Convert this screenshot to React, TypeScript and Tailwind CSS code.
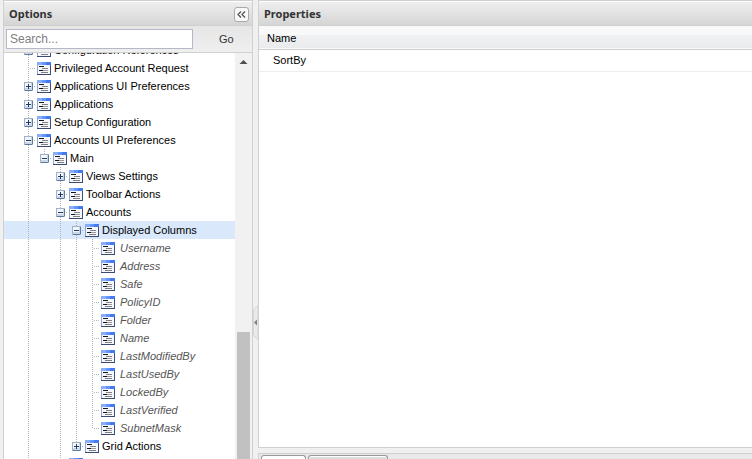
import { useState, type ReactNode } from "react";

type Kind = "leaf" | "plus" | "minus";

interface Row {
  label: string;
  kind: Kind;
  // One entry per ancestor column: true where a guide line passes through.
  guides: boolean[];
  last?: boolean;
  attribute?: boolean;
  selected?: boolean;
}

const columns = [
  "Username",
  "Address",
  "Safe",
  "PolicyID",
  "Folder",
  "Name",
  "LastModifiedBy",
  "LastUsedBy",
  "LockedBy",
  "LastVerified",
  "SubnetMask",
];

const rows: Row[] = [
  { label: "Configuration References", kind: "plus", guides: [false] },
  { label: "Privileged Account Request", kind: "leaf", guides: [false] },
  { label: "Applications UI Preferences", kind: "plus", guides: [false] },
  { label: "Applications", kind: "plus", guides: [false] },
  { label: "Setup Configuration", kind: "plus", guides: [false] },
  { label: "Accounts UI Preferences", kind: "minus", guides: [false] },
  { label: "Main", kind: "minus", guides: [false, true], last: true },
  { label: "Views Settings", kind: "plus", guides: [false, true, false] },
  { label: "Toolbar Actions", kind: "plus", guides: [false, true, false] },
  { label: "Accounts", kind: "minus", guides: [false, true, false] },
  { label: "Displayed Columns", kind: "minus", guides: [false, true, false, true], selected: true },
  ...columns.map((label, i): Row => ({
    label,
    kind: "leaf",
    guides: [false, true, false, true, true],
    last: i === columns.length - 1,
    attribute: true,
  })),
  { label: "Grid Actions", kind: "plus", guides: [false, true, false, true], last: true },
  { label: "", kind: "plus", guides: [false, true, false] },
];

const dots = { stroke: "#b4b4b4", strokeDasharray: "1 1" };

function Guide({ on }: { on: boolean }) {
  return (
    <svg className="h-[18px] w-4 shrink-0" shapeRendering="crispEdges" aria-hidden="true">
      {on && <line x1="8.5" y1="0" x2="8.5" y2="18" {...dots} />}
    </svg>
  );
}

function Elbow({ kind, last }: { kind: Kind; last?: boolean }) {
  return (
    <svg className="h-[18px] w-4 shrink-0" shapeRendering="crispEdges" aria-hidden="true">
      <line x1="8.5" y1="0" x2="8.5" y2={last ? 10 : 18} {...dots} />
      <line x1="10" y1="9.5" x2="16" y2="9.5" {...dots} />
      {kind !== "leaf" && (
        <g>
          <rect x="4" y="5" width="9" height="9" fill="#9fb2ca" />
          <path d="M5 13h7v-7h1v7h-1v1h-7z" fill="#5f7a9f" />
          <rect x="5" y="6" width="7" height="7" fill="#f3f6fb" />
          <path d="M5 11h6v-5h1v7h-7z" fill="#cbd7e6" />
          <rect x="6" y="9" width="5" height="1" fill="#1f3d69" />
          {kind === "plus" && <rect x="8" y="7" width="1" height="5" fill="#1f3d69" />}
        </g>
      )}
    </svg>
  );
}

function NodeIcon() {
  return (
    <svg className="h-[18px] w-4 shrink-0" shapeRendering="crispEdges" aria-hidden="true">
      <rect x="1" y="3" width="14" height="13" fill="#8fa8d0" />
      <rect x="14" y="5" width="1" height="11" fill="#3a5280" />
      <rect x="1" y="15" width="14" height="1" fill="#3a4c70" />
      <rect x="1" y="3" width="5" height="3" fill="#86aefa" />
      <rect x="6" y="3" width="4" height="3" fill="#6595f5" />
      <rect x="10" y="3" width="5" height="3" fill="#447af0" />
      <rect x="2" y="6" width="12" height="9" fill="#f5f7fc" />
      <rect x="3" y="7" width="5" height="1" fill="#151515" />
      <rect x="6" y="9" width="6" height="1" fill="#808080" />
      <rect x="3" y="11" width="4" height="1" fill="#151515" />
      <rect x="7" y="11" width="5" height="1" fill="#999" />
      <rect x="5" y="13" width="7" height="1" fill="#808080" />
    </svg>
  );
}

function Tree() {
  return (
    <ul role="tree" className="-mt-3 min-w-0 flex-1" aria-label="Options">
      {rows.map((r) => (
        <li
          key={r.label}
          role="treeitem"
          aria-selected={!!r.selected}
          className={`flex h-[18px] items-center ${r.selected ? "bg-[#d9e8fb]" : ""}`}
        >
          {r.guides.map((on, i) => (
            <Guide key={i} on={on} />
          ))}
          <Elbow kind={r.kind} last={r.last} />
          <NodeIcon />
          <span
            className={`whitespace-nowrap leading-[18px] ${r.attribute ? "pl-1 text-[#555] italic" : "pl-0.5"}`}
          >
            {r.label}
          </span>
        </li>
      ))}
    </ul>
  );
}

function PanelHeader({ title, children }: { title: string; children?: ReactNode }) {
  return (
    <header className="flex h-[26px] shrink-0 items-center justify-between border-y border-[#d0d0d0] bg-linear-to-b from-[#f0f0f0] to-[#d5d5d5] pt-0.5 pr-[3px] pl-[5px] shadow-[inset_0_1px_0_#fff]">
      <h2 className="font-['Noto_Sans','Open_Sans',sans-serif] text-[11px] leading-4 font-bold text-[#333]">
        {title}
      </h2>
      {children}
    </header>
  );
}

export default function App() {
  const [query, setQuery] = useState("");
  return (
    <div className="flex h-screen overflow-hidden bg-[#f0f0f0] pl-[3px] font-['Liberation_Sans',Arial,sans-serif] text-[11px] text-black">
      <section className="flex w-[250px] shrink-0 flex-col border-x border-[#d0d0d0] bg-white">
        <PanelHeader title="Options">
          <button
            type="button"
            aria-label="Collapse"
            className="flex size-[15px] items-center justify-center rounded-[3px] border border-[#aaa] bg-[#f8f8f8]"
          >
            <svg width="9" height="7" viewBox="0 0 9 7" fill="none" stroke="#555" strokeWidth="1.3" aria-hidden="true">
              <path d="M4 .5 1 3.5l3 3M8 .5 5 3.5l3 3" />
            </svg>
          </button>
        </PanelHeader>
        <form className="flex h-[27px] shrink-0 items-center border-b border-[#d0d0d0] bg-linear-to-b from-[#e6e6e6] to-[#efefef] pl-0.5">
          <input
            type="text"
            aria-label="Search"
            placeholder="Search..."
            value={query}
            onChange={(e) => setQuery(e.target.value)}
            className="h-5 w-[187px] border border-[#b5b8c8] bg-white px-[3px] text-[12px] text-black outline-none placeholder:text-[#808080]"
          />
          <button type="button" className="ml-[26px] text-[11px] text-[#333]">
            Go
          </button>
        </form>
        <div className="flex min-h-0 flex-1 overflow-hidden">
          <Tree />
          <div className="flex w-[17px] shrink-0 flex-col bg-[#f1f1f1] px-0.5" aria-hidden="true">
            <svg className="h-[17px] w-[13px] shrink-0" viewBox="0 0 13 17">
              <path d="M2.5 11 6.5 7l4 4z" fill="#505050" />
            </svg>
            <div className="mt-[262px] flex-1 bg-[#c1c1c1]" />
          </div>
        </div>
      </section>

      <div className="flex w-[5px] shrink-0 items-center pt-[186px]" aria-hidden="true">
        <svg className="h-[35px] w-[5px]" viewBox="0 0 5 35">
          <path d="M5 .5.5 4.500v26L5 34.500z" fill="#eaeaea" stroke="#d6d6d6" />
          <path d="M4 14.500v6L1 17.500z" fill="#808080" />
        </svg>
      </div>

      <div className="flex min-w-0 flex-1 flex-col">
        <section className="flex min-h-0 flex-1 flex-col border-b border-l border-[#d0d0d0] bg-white">
          <PanelHeader title="Properties" />
          <table className="w-full border-collapse text-left">
            <thead>
              <tr className="h-[23px] border-b border-[#d0d0d0] bg-linear-to-b from-[#f9f9f9] from-40% via-[#eff1f3] via-40% to-[#e9ebec]">
                <th className="pt-0.5 pl-2 font-normal">Name</th>
              </tr>
            </thead>
            <tbody>
              <tr className="h-[22px] border-b border-[#ededed]">
                <td className="pl-3.5">SortBy</td>
              </tr>
            </tbody>
          </table>
        </section>
        <div
          className="mt-[5px] flex h-1.5 shrink-0 gap-0.5 border-t border-l border-[#d0d0d0] bg-[#e9e9e9] pt-px pl-0.5"
          aria-hidden="true"
        >
          <div className="w-[45px] rounded-t-[3px] border border-b-0 border-[#999] bg-white" />
          <div className="w-20 rounded-t-[3px] border border-b-0 border-[#999] bg-[#dedede] shadow-[inset_0_1px_0_#fff]" />
        </div>
      </div>
    </div>
  );
}
